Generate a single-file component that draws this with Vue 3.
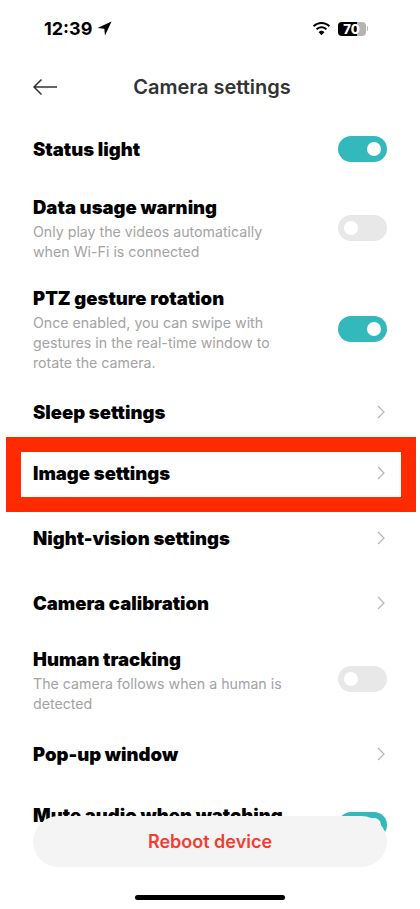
<template>
  <div class="phone">
    <!-- Status bar -->
    <div class="status-bar">
      <div class="status-left">
        <span class="clock">12:39</span>
        <svg class="location" viewBox="0 0 16 16">
          <path d="M15.500 .5 .5 7.500l7.300.7.7 7.300z" />
        </svg>
      </div>
      <div class="status-right">
        <svg class="wifi" viewBox="0 0 20 15">
          <path d="M10 2.200c3 0 5.700 1.100 7.800 3.100l1.400-1.500C16.800 1.400 13.500 0 10 0S3.200 1.400.8 3.800l1.400 1.500C4.300 3.300 7 2.200 10 2.200zm0 4.600c1.700 0 3.300.7 4.500 1.800l1.500-1.500C14.400 5.500 12.300 4.500 10 4.500S5.600 5.500 4 7.100l1.500 1.500C6.700 7.500 8.300 6.800 10 6.800zm-3 4.100c.7-1 1.800-1.600 3-1.600s2.300.6 3 1.600l-3 3.400z" />
        </svg>
        <div class="battery">
          <div class="battery-level"></div>
          <span class="battery-text">70</span>
        </div>
        <div class="battery-cap"></div>
      </div>
    </div>

    <!-- Header -->
    <header class="nav">
      <svg class="back" viewBox="0 0 26 18">
        <path d="M25 9H2M9.500 1.500 2 9l7.500 7.500" />
      </svg>
      <h1>Camera settings</h1>
    </header>

    <!-- Settings -->
    <div class="list">
      <div
        v-for="item in items"
        :key="item.title"
        class="row"
        :style="{ height: item.height + 'px' }"
      >
        <div class="row-text" :class="{ 'with-desc': item.desc }">
          <div class="row-title">{{ item.title }}</div>
          <div v-if="item.desc" class="row-desc">{{ item.desc }}</div>
        </div>
        <div v-if="item.toggle !== undefined" class="switch" :class="{ on: item.toggle }">
          <span class="knob"></span>
        </div>
        <svg v-else class="chevron" viewBox="0 0 8 14">
          <path d="M1 1l6 6-6 6" />
        </svg>
        <div v-if="item.marked" class="mark"></div>
      </div>
    </div>

    <!-- Bottom button -->
    <div class="reboot">Reboot device</div>
    <div class="home-bar"></div>
  </div>
</template>

<script setup>
const items = [
  { title: 'Status light', toggle: true, height: 60 },
  {
    title: 'Data usage warning',
    desc: 'Only play the videos automatically when Wi-Fi is connected',
    toggle: false,
    height: 97
  },
  {
    title: 'PTZ gesture rotation',
    desc: 'Once enabled, you can swipe with gestures in the real-time window to rotate the camera.',
    toggle: true,
    height: 105
  },
  { title: 'Sleep settings', height: 62 },
  { title: 'Image settings', height: 60, marked: true },
  { title: 'Night-vision settings', height: 70 },
  { title: 'Camera calibration', height: 60 },
  {
    title: 'Human tracking',
    desc: 'The camera follows when a human is detected',
    toggle: false,
    height: 92
  },
  { title: 'Pop-up window', height: 57 },
  // описание этой строки закрыто кнопкой
  { title: 'Mute audio when watching', desc: '\u00a0', toggle: true, height: 86 }
]
</script>

<style>
html,
body {
  margin: 0;
  background: #fff;
}
</style>

<style scoped>
.phone {
  position: relative;
  width: 420px;
  height: 909px;
  overflow: hidden;
  background: #fff;
  font-family: Inter, "Liberation Sans", sans-serif;
  color: #000;
}

/* Status bar */
.status-bar {
  display: flex;
  justify-content: space-between;
  align-items: center;
  height: 29px;
  padding: 14px 52px 0 44px;
}

.status-left,
.status-right {
  display: flex;
  align-items: center;
}

.clock {
  font-size: 18px;
  font-weight: 700;
}

.location {
  width: 15px;
  height: 15px;
  margin-left: 5px;
  fill: #000;
}

.wifi {
  width: 19px;
  height: 14px;
  margin-right: 7px;
  fill: #000;
}

.battery {
  position: relative;
  width: 28px;
  height: 14px;
  border-radius: 4px;
  background: #b4b4b4;
  overflow: hidden;
}

.battery-level {
  width: 70%;
  height: 100%;
  background: #000;
}

.battery-text {
  position: absolute;
  top: 0;
  left: 0;
  width: 100%;
  text-align: center;
  color: #fff;
  font-size: 13px;
  font-weight: 800;
  line-height: 14px;
}

.battery-cap {
  width: 1.500px;
  height: 5px;
  margin-left: 1px;
  border-radius: 0 1px 1px 0;
  background: #bbb;
}

/* Header */
.nav {
  position: relative;
  display: flex;
  align-items: center;
  justify-content: center;
  height: 60px;
  margin-top: 14px;
  padding-left: 4px;
}

.nav h1 {
  margin: 0;
  font-size: 20px;
  font-weight: 600;
  color: #333;
}

.back {
  position: absolute;
  left: 32px;
  top: 21px;
  width: 26px;
  height: 18px;
  fill: none;
  stroke: #333;
  stroke-width: 1.500;
}

/* List */
.list {
  padding-top: 2px;
}

.row {
  position: relative;
  box-sizing: border-box;
  display: flex;
  align-items: center;
  justify-content: space-between;
  padding: 0 33px;
}

.row-text {
  width: 252px;
}

.row-text.with-desc {
  padding-top: 2px;
}

.row-title {
  font-size: 18.500px;
  font-weight: 900;
  line-height: 24px;
  white-space: nowrap;
}

.row-desc {
  margin-top: 3px;
  font-size: 14.200px;
  line-height: 20px;
  color: #a3a3a3;
}

.switch {
  display: flex;
  align-items: center;
  justify-content: flex-start;
  width: 49px;
  height: 26px;
  border-radius: 13px;
  background: #e8e8e8;
}

.switch.on {
  justify-content: flex-end;
  background: #33b8bb;
}

.knob {
  width: 14px;
  height: 14px;
  margin: 0 6px;
  border-radius: 50%;
  background: #fff;
}

.chevron {
  width: 8px;
  height: 14px;
  margin-right: 2px;
  fill: none;
  stroke: #b5b5b5;
  stroke-width: 1.200;
}

/* Red annotation frame */
.mark {
  position: absolute;
  top: -6px;
  bottom: -9px;
  left: 6px;
  right: 4px;
  border: 15px solid #ff2a00;
}

/* Bottom */
.reboot {
  position: absolute;
  left: 33px;
  top: 816px;
  width: 354px;
  height: 51px;
  border-radius: 26px;
  background: #f4f4f4;
  display: flex;
  align-items: center;
  justify-content: center;
  font-size: 18px;
  font-weight: 600;
  color: #f53c32;
}

.home-bar {
  position: absolute;
  left: 135px;
  top: 895px;
  width: 150px;
  height: 4.500px;
  border-radius: 3px;
  background: #000;
}
</style>
